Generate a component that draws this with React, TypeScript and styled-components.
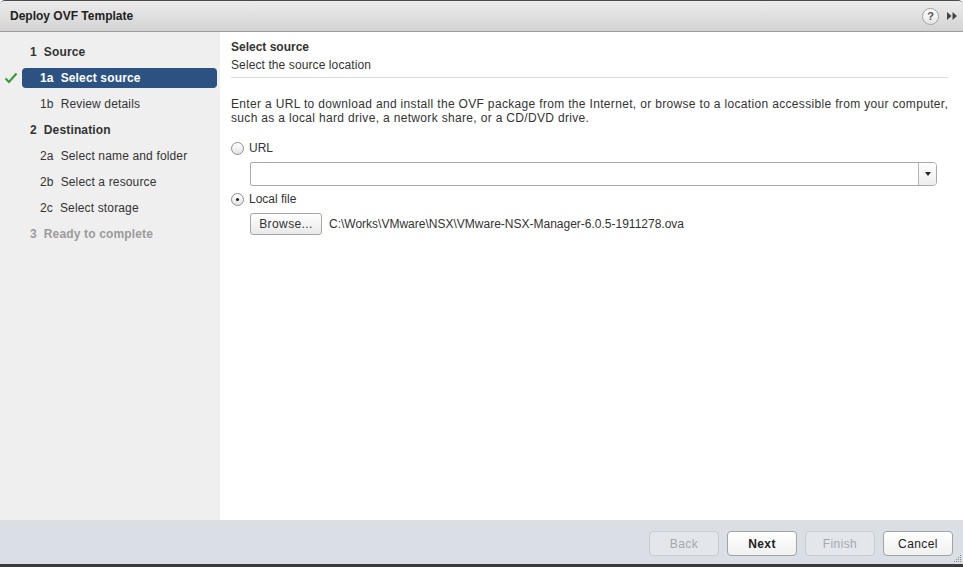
import * as React from 'react';
import styled, { createGlobalStyle } from 'styled-components';

const GlobalStyle = createGlobalStyle`
  html, body {
    margin: 0;
    padding: 0;
    background: #ffffff;
  }
  body {
    font-family: "Liberation Sans", Arial, sans-serif;
    font-size: 12px;
    color: #333;
  }
`;

const Window = styled.div`
  width: 963px;
  height: 567px;
  box-sizing: border-box;
  display: flex;
  flex-direction: column;
  border-top: 1px solid #4a4a4a;
  border-bottom: 3px solid #3a3a3a;
  border-radius: 5px 5px 0 0;
  overflow: hidden;
  position: relative;
`;

const TitleBar = styled.div`
  height: 30px;
  flex: none;
  display: flex;
  align-items: center;
  padding: 0 5px 0 10px;
  background: linear-gradient(#ececec, #d3d3d3);
  border-bottom: 1px solid #9c9c9c;
`;

const Title = styled.div`
  flex: 1;
  font-weight: bold;
  color: #222;
  font-size: 12px;
`;

const TitleTools = styled.div`
  display: flex;
  align-items: center;
  gap: 7px;
`;

const HelpIcon = styled.div`
  width: 15px;
  height: 15px;
  border-radius: 50%;
  border: 1px solid #a0a0a0;
  background: linear-gradient(#ffffff, #e6e6e6);
  color: #555;
  font-weight: bold;
  font-size: 11px;
  display: flex;
  align-items: center;
  justify-content: center;
`;

const Body = styled.div`
  flex: 1;
  display: flex;
  min-height: 0;
`;

const Sidebar = styled.div`
  width: 220px;
  flex: none;
  background: #efefef;
  padding-top: 7px;
  box-sizing: border-box;
`;

const StepRow = styled.div`
  height: 26px;
  display: flex;
  align-items: center;
  position: relative;
`;

const StepPill = styled.div<{ $level: number; $active?: boolean; $disabled?: boolean; $bold?: boolean }>`
  margin-left: 22px;
  margin-right: 3px;
  flex: 1;
  height: 20px;
  display: flex;
  align-items: center;
  padding-left: ${(p) => (p.$level === 0 ? 8 : 18)}px;
  border-radius: 4px;
  background: ${(p) => (p.$active ? '#2c5282' : 'transparent')};
  color: ${(p) => (p.$active ? '#ffffff' : p.$disabled ? '#9b9b9b' : '#333')};
  font-weight: ${(p) => (p.$bold || p.$active ? 'bold' : 'normal')};
  letter-spacing: 0.15px;
  white-space: pre;
`;

const Check = styled.svg`
  position: absolute;
  left: 4px;
  top: 7px;
`;

const Content = styled.div`
  flex: 1;
  min-width: 0;
  background: #ffffff;
  padding: 7px 15px 0 11px;
  box-sizing: border-box;
`;

const Heading = styled.div`
  font-weight: bold;
  line-height: 16px;
  color: #333;
`;

const SubHeading = styled.div`
  line-height: 16px;
  margin-top: 2px;
  color: #333;
  letter-spacing: 0.1px;
`;

const Divider = styled.div`
  height: 1px;
  background: #dcdcdc;
  margin-top: 4px;
`;

const Intro = styled.p`
  margin: 19px 0 0;
  line-height: 14px;
  color: #333;
  letter-spacing: 0.33px;
  white-space: nowrap;
`;

const RadioRow = styled.label<{ $gap: number }>`
  display: flex;
  align-items: center;
  gap: 5px;
  height: 16px;
  margin-top: ${(p) => p.$gap}px;
  color: #333;
`;

const RadioCircle = styled.span<{ $checked?: boolean }>`
  width: 11px;
  height: 11px;
  border-radius: 50%;
  border: 1px solid #8e8e8e;
  background: linear-gradient(#ffffff, #e4e4e4);
  display: flex;
  align-items: center;
  justify-content: center;
  &::after {
    content: '';
    width: 3px;
    height: 3px;
    border-radius: 50%;
    background: ${(p) => (p.$checked ? '#222' : 'transparent')};
  }
`;

const Indented = styled.div`
  margin: 6px 11px 0 19px;
  display: flex;
  align-items: center;
`;

const ComboBox = styled.div`
  flex: 1;
  height: 24px;
  box-sizing: border-box;
  border: 1px solid #a9a9a9;
  border-radius: 2px 4px 4px 2px;
  display: flex;
  background: #fff;
`;

const ComboInput = styled.div`
  flex: 1;
`;

const ComboArrow = styled.div`
  width: 17px;
  border-left: 1px solid #b5b5b5;
  background: linear-gradient(#ffffff, #ededed);
  border-radius: 0 3px 3px 0;
  display: flex;
  align-items: center;
  justify-content: center;
  &::after {
    content: '';
    border-left: 3px solid transparent;
    border-right: 3px solid transparent;
    border-top: 4px solid #222;
  }
`;

const SmallButton = styled.div`
  width: 72px;
  height: 22px;
  box-sizing: border-box;
  border: 1px solid #a6a6a6;
  border-radius: 3px;
  background: linear-gradient(#ffffff, #e9e9e9);
  display: flex;
  align-items: center;
  justify-content: center;
  color: #333;
  letter-spacing: 0.4px;
`;

const FilePath = styled.span`
  margin-left: 7px;
  color: #333;
`;

const Footer = styled.div`
  height: 44px;
  flex: none;
  background: #dadee5;
  display: flex;
  align-items: flex-start;
  justify-content: flex-end;
  gap: 8px;
  padding: 11px 10px 0 0;
  box-sizing: border-box;
`;

const FooterButton = styled.div<{ $primary?: boolean; $disabled?: boolean }>`
  width: 70px;
  height: 25px;
  box-sizing: border-box;
  border-radius: 4px;
  border: 1px solid ${(p) => (p.$disabled ? '#c8cdd3' : '#a3a3a3')};
  background: ${(p) => (p.$disabled ? '#e3e6ea' : 'linear-gradient(#ffffff, #f0f0f0)')};
  color: ${(p) => (p.$disabled ? '#a6a9ad' : '#222')};
  font-weight: ${(p) => (p.$primary ? 'bold' : 'normal')};
  display: flex;
  align-items: center;
  justify-content: center;
  font-size: 12px;
  letter-spacing: 0.4px;
`;

const Grip = styled.svg`
  position: absolute;
  right: 1px;
  bottom: 1px;
`;

type Step = { num: string; label: string; level: number; bold?: boolean; active?: boolean; done?: boolean; disabled?: boolean };

const steps: Step[] = [
  { num: '1', label: 'Source', level: 0, bold: true },
  { num: '1a', label: 'Select source', level: 1, active: true, done: true },
  { num: '1b', label: 'Review details', level: 1 },
  { num: '2', label: 'Destination', level: 0, bold: true },
  { num: '2a', label: 'Select name and folder', level: 1 },
  { num: '2b', label: 'Select a resource', level: 1 },
  { num: '2c', label: 'Select storage', level: 1 },
  { num: '3', label: 'Ready to complete', level: 0, bold: true, disabled: true },
];

export default function App() {
  return (
    <>
      <GlobalStyle />
      <Window>
        <TitleBar>
          <Title>Deploy OVF Template</Title>
          <TitleTools>
            <HelpIcon>?</HelpIcon>
            <svg width="12" height="10" viewBox="0 0 12 10">
              <path d="M1 1 L5.5 5 L1 9 Z M6.5 1 L11 5 L6.5 9 Z" fill="#444" />
            </svg>
          </TitleTools>
        </TitleBar>
        <Body>
          <Sidebar>
            {steps.map((s) => (
              <StepRow key={s.num}>
                {s.done && (
                  <Check width="14" height="12" viewBox="0 0 14 12">
                    <path d="M1.5 6.5 L5 10 L12.5 1.5" stroke="#3a9a3a" strokeWidth="2.2" fill="none" />
                  </Check>
                )}
                <StepPill $level={s.level} $active={s.active} $disabled={s.disabled} $bold={s.bold}>
                  {s.num}  {s.label}
                </StepPill>
              </StepRow>
            ))}
          </Sidebar>
          <Content>
            <Heading>Select source</Heading>
            <SubHeading>Select the source location</SubHeading>
            <Divider />
            <Intro>
              Enter a URL to download and install the OVF package from the Internet, or browse to a location accessible from your computer,
              <br />
              such as a local hard drive, a network share, or a CD/DVD drive.
            </Intro>
            <RadioRow $gap={15}>
              <RadioCircle />
              URL
            </RadioRow>
            <Indented>
              <ComboBox>
                <ComboInput />
                <ComboArrow />
              </ComboBox>
            </Indented>
            <RadioRow $gap={5}>
              <RadioCircle $checked />
              Local file
            </RadioRow>
            <Indented>
              <SmallButton>Browse...</SmallButton>
              <FilePath>C:\Works\VMware\NSX\VMware-NSX-Manager-6.0.5-1911278.ova</FilePath>
            </Indented>
          </Content>
        </Body>
        <Footer>
          <FooterButton $disabled>Back</FooterButton>
          <FooterButton $primary>Next</FooterButton>
          <FooterButton $disabled>Finish</FooterButton>
          <FooterButton>Cancel</FooterButton>
        </Footer>
        <Grip width="8" height="8" viewBox="0 0 8 8">
          {[
            [6, 0], [6, 2], [4, 2], [6, 4], [4, 4], [2, 4], [6, 6], [4, 6], [2, 6], [0, 6],
          ].map(([x, y]) => (
            <rect key={`${x}-${y}`} x={x} y={y} width="1" height="1" fill="#888" />
          ))}
        </Grip>
      </Window>
    </>
  );
}
